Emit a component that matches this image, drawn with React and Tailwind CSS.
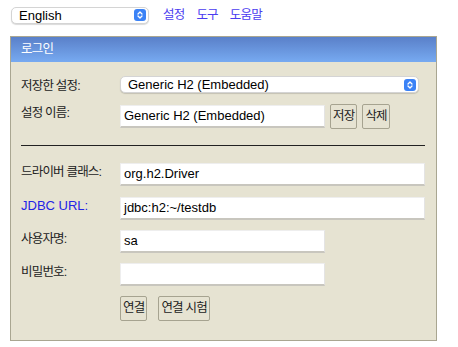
import React from "react";

const font = { fontFamily: '"Liberation Sans", "Noto Sans CJK KR", sans-serif' };

// 한글 글자폭을 원본(Apple SD Gothic)에 맞추기 위해 조금 좁힘
const ko = "text-[12.5px] tracking-[-0.8px]";

// macOS 스타일 셀렉트 (흰 바탕 + 파란 화살표 버튼)
const MacSelect = ({ value, className }) => (
  <div
    className={`flex items-center justify-between bg-white rounded-[5px] border border-[#d4d4d4] shadow-[0_1px_1px_rgba(0,0,0,0.15)] pl-[7px] pr-[2px] ${className}`}
  >
    <span className="text-[13px] leading-none text-black">{value}</span>
    <span className="flex items-center justify-center w-[12px] h-[12px] rounded-[3px] bg-[#3b82f6]">
      <svg width="8" height="10" viewBox="0 0 8 10">
        <path d="M2 4 L4 2 L6 4" stroke="white" strokeWidth="1.3" fill="none" strokeLinecap="round" strokeLinejoin="round" />
        <path d="M2 6 L4 8 L6 6" stroke="white" strokeWidth="1.3" fill="none" strokeLinecap="round" strokeLinejoin="round" />
      </svg>
    </span>
  </div>
);

const Field = ({ value, width }) => (
  <div
    className={`${width} h-[23px] bg-white border-t border-l border-[#eeeeee] border-b-2 border-b-[#c8c6be] border-r border-r-[#e4e4e4] flex items-center pl-[3px] text-[13px] text-black`}
  >
    {value}
  </div>
);

const Btn = ({ children }) => (
  <button
    className={`h-[25px] px-[2px] border border-[#a6a390] rounded-[2px] bg-[#e6e3d2] ${ko} text-[#222] leading-none`}
  >
    {children}
  </button>
);

const Row = ({ label, labelClass = `text-[#222] ${ko}`, children, className = "" }) => (
  <div className={`flex items-start ${className}`}>
    <div className={`w-[99px] shrink-0 leading-[18px] ${labelClass}`}>{label}</div>
    {children}
  </div>
);

export default function App() {
  return (
    <div className="w-[458px] h-[347px] bg-white relative" style={font}>
      {/* 상단 바 */}
      <div className="flex items-center pt-[6px] pl-[11px] h-[24px]">
        <MacSelect value="English" className="w-[138px] h-[17px]" />
        <div className={`flex gap-[12px] ml-[14px] ${ko} text-[#4b3cf0] leading-none`}>
          <span>설정</span>
          <span>도구</span>
          <span>도움말</span>
        </div>
      </div>

      {/* 로그인 패널 */}
      <div className="mt-[12px] ml-[10px] w-[427px] h-[305px] border border-[#a9a691] bg-[#e6e3d2]">
        <div className={`h-[25px] bg-gradient-to-b from-[#5a80c9] to-[#77aaf1] text-white ${ko} flex items-center pl-[10px]`}>
          로그인
        </div>

        <div className="pl-[10px] pt-[15px]">
          <Row label="저장한 설정:" className="h-[16px]">
            <MacSelect value="Generic H2 (Embedded)" className="w-[299px] h-[17px] -mt-[1px]" />
          </Row>

          <Row label="설정 이름:" className="mt-[11px]">
            <div className="flex items-center gap-[5px]">
              <Field value="Generic H2 (Embedded)" width="w-[205px]" />
              <Btn>저장</Btn>
              <Btn>삭제</Btn>
            </div>
          </Row>

          <div className="mt-[16px] w-[404px] h-[1px] bg-[#222]" />

          <Row label="드라이버 클래스:" className="mt-[17px]">
            <Field value="org.h2.Driver" width="w-[305px]" />
          </Row>

          <Row label="JDBC URL:" labelClass="text-[#2424e6] text-[13px]" className="mt-[11px]">
            <Field value="jdbc:h2:~/testdb" width="w-[305px]" />
          </Row>

          <Row label="사용자명:" className="mt-[10px]">
            <Field value="sa" width="w-[205px]" />
          </Row>

          <Row label="비밀번호:" className="mt-[10px]">
            <Field value="" width="w-[205px]" />
          </Row>

          <div className="flex gap-[11px] ml-[99px] mt-[10px]">
            <Btn>연결</Btn>
            <Btn>연결 시험</Btn>
          </div>
        </div>
      </div>
    </div>
  );
}
